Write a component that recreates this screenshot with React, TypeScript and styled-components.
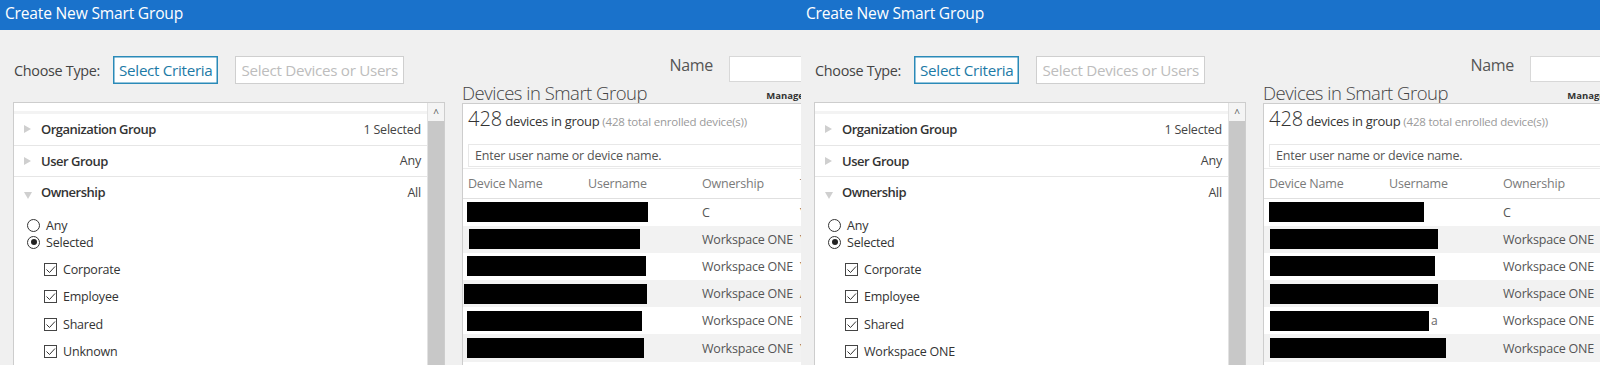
import React, { FC } from "react";
import styled, { createGlobalStyle } from "styled-components";

const GlobalStyle = createGlobalStyle`
  html, body {
    margin: 0;
    padding: 0;
    background: #f0f0f0;
    overflow: hidden;
  }
  body {
    font-family: "Open Sans", "Liberation Sans", sans-serif;
    color: #333;
  }
`;

type Redaction = {
  x: number;
  w: number;
  tail?: string;
};

type PanelProps = {
  width: number;
  lastOption: string;
  redactions: Redaction[];
};

const Screens = styled.div`
  display: flex;
  width: 1600px;
  height: 365px;
  overflow: hidden;
`;

const Dialog = styled.div<{ $width: number }>`
  flex: 0 0 ${p => p.$width}px;
  height: 365px;
  overflow: hidden;
  background: #f0f0f0;
  display: flex;
  flex-direction: column;
`;

const Header = styled.div`
  height: 30px;
  flex: 0 0 30px;
  background: #1a72cb;
  display: flex;
  align-items: center;
  padding-left: 5px;
  padding-bottom: 5px;
  box-sizing: border-box;
`;

const Title = styled.span`
  color: #fff;
  font-size: 15.6px;
  font-stretch: 88%;
  letter-spacing: -0.2px;
  white-space: nowrap;
`;

const Body = styled.div`
  display: grid;
  grid-template-columns: 432px 345px;
  column-gap: 17px;
  padding: 26px 0 0 13px;
`;

const LeftColumn = styled.div`
  display: flex;
  flex-direction: column;
`;

const RightColumn = styled.div`
  display: flex;
  flex-direction: column;
`;

const TypeRow = styled.div`
  display: flex;
  align-items: center;
  height: 28px;
  padding-left: 1px;
`;

const TypeLabel = styled.span`
  font-size: 14.4px;
  font-stretch: 88%;
  letter-spacing: -0.3px;
  color: #444;
  margin-right: 13px;
  white-space: nowrap;
`;

const TypeButton = styled.div<{ $active?: boolean }>`
  height: 28px;
  box-sizing: border-box;
  display: flex;
  align-items: center;
  padding: 0 5px;
  margin-right: 17px;
  background: #fff;
  border: 1px solid ${p => (p.$active ? "#2a8ab8" : "#cfcfcf")};
  box-shadow: ${p => (p.$active ? "inset 0 0 0 0.5px #2a8ab8" : "none")};
  color: ${p => (p.$active ? "#1c7aa6" : "#bdbdbd")};
  font-size: 15.2px;
  font-stretch: 88%;
  letter-spacing: -0.3px;
  white-space: nowrap;
`;

const CriteriaBox = styled.div`
  margin-top: 18px;
  height: 270px;
  border: 1px solid #cdcdcd;
  background: #fff;
  display: flex;
`;

const CriteriaList = styled.div`
  flex: 1;
  display: flex;
  flex-direction: column;
  padding-top: 8px;
  border-right: 1px solid #e2e2e2;
`;

const CriteriaRow = styled.div`
  height: 30.5px;
  display: flex;
  align-items: center;
  padding: 0 6px 0 10px;
  border-top: 1px solid #e6e6e6;
  &:first-child {
    border-top: 3px solid #f3f3f3;
  }
`;

const Arrow = styled.span<{ $open?: boolean }>`
  width: 0;
  height: 0;
  flex: 0 0 auto;
  ${p =>
    p.$open
      ? `border-left: 4.5px solid transparent;
         border-right: 4.5px solid transparent;
         border-top: 7px solid #cfcfcf;
         margin: 6px 9px 0 0;`
      : `border-top: 4.5px solid transparent;
         border-bottom: 4.5px solid transparent;
         border-left: 7px solid #cfcfcf;
         margin-right: 10px;`}
`;

const CriteriaName = styled.span`
  flex: 1;
  font-size: 13px;
  font-weight: 600;
  color: #333;
  letter-spacing: -0.5px;
`;

const CriteriaValue = styled.span`
  font-size: 12.5px;
  color: #444;
  letter-spacing: -0.2px;
`;

const Options = styled.div`
  padding: 9px 0 0 13px;
  display: flex;
  flex-direction: column;
`;

const RadioLine = styled.div`
  display: flex;
  align-items: center;
  height: 17px;
  font-size: 12.5px;
  color: #333;
  letter-spacing: -0.2px;
`;

const Radio = styled.span<{ $checked?: boolean }>`
  width: 11px;
  height: 11px;
  border-radius: 50%;
  border: 1px solid #333;
  margin-right: 6px;
  position: relative;
  background: #fff;
  &::after {
    content: "";
    display: ${p => (p.$checked ? "block" : "none")};
    position: absolute;
    left: 2.5px;
    top: 2.5px;
    width: 6px;
    height: 6px;
    border-radius: 50%;
    background: #222;
  }
`;

const CheckList = styled.div`
  display: flex;
  flex-direction: column;
  padding: 5px 0 0 30px;
`;

const CheckLine = styled.div`
  display: flex;
  align-items: center;
  height: 27.5px;
  font-size: 12.5px;
  color: #333;
  letter-spacing: -0.2px;
  svg {
    margin-right: 6px;
  }
`;

const Scrollbar = styled.div`
  width: 16px;
  display: flex;
  flex-direction: column;
  background: #f4f4f4;
`;

const ScrollUp = styled.div`
  height: 18px;
  display: flex;
  justify-content: center;
  align-items: center;
  font-size: 10px;
  color: #555;
  padding-top: 2px;
  box-sizing: border-box;
`;

const ScrollThumb = styled.div`
  flex: 1;
  background: #c8c8c8;
`;

const NameRow = styled.div`
  height: 28px;
  display: flex;
  align-items: flex-start;
  justify-content: flex-end;
`;

const NameLabel = styled.span`
  font-size: 16px;
  color: #555;
  margin-right: 16px;
  line-height: 18px;
  letter-spacing: -0.3px;
`;

const NameInput = styled.div`
  width: 78px;
  height: 26px;
  box-sizing: border-box;
  border: 1px solid #d8d8d8;
  border-right: none;
  background: #fff;
`;

const DevicesTitleRow = styled.div`
  height: 19px;
  display: flex;
  align-items: flex-end;
  justify-content: space-between;
`;

const DevicesTitle = styled.span`
  font-size: 18.5px;
  font-weight: 300;
  color: #444;
  line-height: 20px;
  letter-spacing: -0.5px;
  white-space: nowrap;
`;

const Manage = styled.span`
  font-size: 9.5px;
  font-weight: 700;
  color: #333;
  margin-bottom: 1px;
  margin-right: 3px;
`;

const DevicesBox = styled.div`
  height: 300px;
  border: 1px solid #cdcdcd;
  border-right: none;
  background: #fff;
  display: flex;
  flex-direction: column;
`;

const CountLine = styled.div`
  height: 30px;
  display: flex;
  align-items: baseline;
  padding: 1px 0 0 5px;
  box-sizing: border-box;
  white-space: nowrap;
`;

const CountBig = styled.span`
  font-size: 20px;
  font-weight: 300;
  color: #333;
  margin-right: 3px;
`;

const CountText = styled.span`
  font-size: 13px;
  color: #333;
  letter-spacing: -0.3px;
  margin-right: 3px;
`;

const CountMuted = styled.span`
  font-size: 11.5px;
  color: #9a9a9a;
  letter-spacing: -0.2px;
`;

const Search = styled.div`
  margin: 10px 0 0 5px;
  height: 21px;
  border: 1px solid #e8e8e8;
  border-right: none;
  display: flex;
  align-items: center;
  padding-left: 6px;
  font-size: 12.5px;
  color: #555;
  letter-spacing: -0.2px;
  white-space: nowrap;
`;

const TableGrid = styled.div`
  margin-top: 1px;
  display: grid;
  grid-template-columns: 120px 114px 98px 100px;
  grid-template-rows: 29.5px;
  grid-auto-rows: 27.2px;
  border-top: 1px solid #ececec;
`;

const HeadCell = styled.div`
  display: flex;
  align-items: center;
  padding: 1px 0 0 5px;
  font-size: 12.5px;
  color: #7a7a7a;
  letter-spacing: -0.2px;
  border-bottom: 1px solid #e0e0e0;
  white-space: nowrap;
`;

const Cell = styled.div<{ $shaded: boolean; $span?: number }>`
  display: flex;
  align-items: center;
  padding-left: 5px;
  font-size: 12.5px;
  color: #555;
  letter-spacing: -0.2px;
  white-space: nowrap;
  background: ${p => (p.$shaded ? "#f2f2f2" : "#fff")};
  grid-column: span ${p => p.$span || 1};
`;

const Redacted = styled.span`
  height: 20px;
  background: #000;
  display: inline-block;
`;

const Tail = styled.span`
  font-size: 12px;
  color: #666;
  margin-left: 2px;
`;

const CheckIcon: FC = () => (
  <svg width="13" height="13" viewBox="0 0 13 13">
    <rect x="0.5" y="0.5" width="12" height="12" fill="#fff" stroke="#444" strokeWidth="1" />
    <polyline points="2.5,6.5 5.5,9.5 11,3.5" fill="none" stroke="#333" strokeWidth="1" />
  </svg>
);

const ownership = ["C", "Workspace ONE", "Workspace ONE", "Workspace ONE", "Workspace ONE", "Workspace ONE"];
const fourth = ["Y", "Y", "Y", "A", "Y", "Y"];

const SmartGroupDialog: FC<PanelProps> = ({ width, lastOption, redactions }) => {
  const criteria = [
    { name: "Organization Group", value: "1 Selected" },
    { name: "User Group", value: "Any" },
    { name: "Ownership", value: "All", open: true }
  ];
  const checks = ["Corporate", "Employee", "Shared", lastOption];

  return (
    <Dialog $width={width}>
      <Header>
        <Title>Create New Smart Group</Title>
      </Header>
      <Body>
        <LeftColumn>
          <TypeRow>
            <TypeLabel>Choose Type:</TypeLabel>
            <TypeButton $active>Select Criteria</TypeButton>
            <TypeButton>Select Devices or Users</TypeButton>
          </TypeRow>
          <CriteriaBox>
            <CriteriaList>
              {criteria.map(c => (
                <CriteriaRow key={c.name}>
                  <Arrow $open={c.open} />
                  <CriteriaName>{c.name}</CriteriaName>
                  <CriteriaValue>{c.value}</CriteriaValue>
                </CriteriaRow>
              ))}
              <Options>
                <RadioLine>
                  <Radio />
                  Any
                </RadioLine>
                <RadioLine>
                  <Radio $checked />
                  Selected
                </RadioLine>
              </Options>
              <CheckList>
                {checks.map(c => (
                  <CheckLine key={c}>
                    <CheckIcon />
                    {c}
                  </CheckLine>
                ))}
              </CheckList>
            </CriteriaList>
            <Scrollbar>
              <ScrollUp>^</ScrollUp>
              <ScrollThumb />
            </Scrollbar>
          </CriteriaBox>
        </LeftColumn>
        <RightColumn>
          <NameRow>
            <NameLabel>Name</NameLabel>
            <NameInput />
          </NameRow>
          <DevicesTitleRow>
            <DevicesTitle>Devices in Smart Group</DevicesTitle>
            <Manage>Manage</Manage>
          </DevicesTitleRow>
          <DevicesBox>
            <CountLine>
              <CountBig>428</CountBig>
              <CountText>devices in group</CountText>
              <CountMuted>(428 total enrolled device(s))</CountMuted>
            </CountLine>
            <Search>Enter user name or device name.</Search>
            <TableGrid>
              <HeadCell>Device Name</HeadCell>
              <HeadCell>Username</HeadCell>
              <HeadCell>Ownership</HeadCell>
              <HeadCell>Type</HeadCell>
              {redactions.map((r, i) => (
                <React.Fragment key={i}>
                  <Cell $shaded={i % 2 === 1} $span={2}>
                    <Redacted style={{ width: r.w, marginLeft: r.x }} />
                    {r.tail && <Tail>{r.tail}</Tail>}
                  </Cell>
                  <Cell $shaded={i % 2 === 1}>{ownership[i]}</Cell>
                  <Cell $shaded={i % 2 === 1}>{fourth[i]}</Cell>
                </React.Fragment>
              ))}
            </TableGrid>
          </DevicesBox>
        </RightColumn>
      </Body>
    </Dialog>
  );
};

const App: FC = () => (
  <>
    <GlobalStyle />
    <Screens>
      <SmartGroupDialog
        width={801}
        lastOption="Unknown"
        redactions={[
          { x: -1, w: 181 },
          { x: 1, w: 171 },
          { x: -1, w: 179 },
          { x: -4, w: 183 },
          { x: -1, w: 175 },
          { x: -1, w: 177 }
        ]}
      />
      <SmartGroupDialog
        width={799}
        lastOption="Workspace ONE"
        redactions={[
          { x: 0, w: 155 },
          { x: 1, w: 168 },
          { x: 1, w: 165 },
          { x: 1, w: 168 },
          { x: 1, w: 159, tail: "a" },
          { x: 1, w: 176 }
        ]}
      />
    </Screens>
  </>
);

export default App;
